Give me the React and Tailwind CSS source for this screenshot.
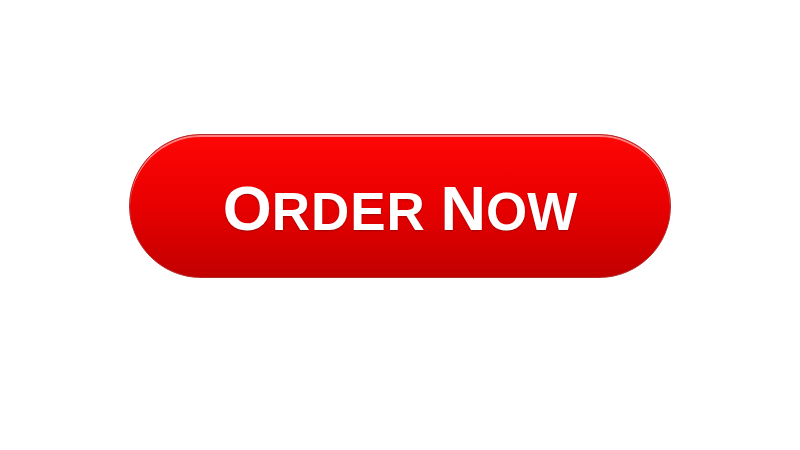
export default function App() {
  return (
    <div className="w-full h-[450px] bg-white flex flex-col items-center pt-[134px]">
      <button
        className="w-[542px] h-[144px] rounded-full border border-[#b42a2a] bg-gradient-to-b from-[#ff0606] via-[#e80000] to-[#c20000] shadow-[inset_0_2px_0_rgba(255,150,150,0.85)] flex items-center justify-center pt-[5px]"
      >
        <span
          className="text-white font-bold leading-none flex items-baseline"
          style={{ fontFamily: '"Liberation Sans", Arial, sans-serif', textShadow: '0 1px 2px rgba(90,0,0,0.45)' }}
        >
          <span className="text-[63px]">O</span>
          <span className="text-[53px] tracking-[1px]">RDER</span>
          <span className="text-[53px]">&nbsp;</span>
          <span className="text-[63px]">N</span>
          <span className="text-[53px]">OW</span>
        </span>
      </button>
    </div>
  )
}
